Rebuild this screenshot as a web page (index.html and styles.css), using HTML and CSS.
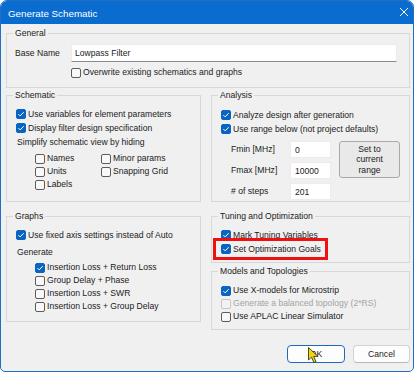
FILE: index.html
```html
<!DOCTYPE html>
<html lang="en">
<head>
    <meta charset="UTF-8">
    <meta name="viewport" content="width=device-width, initial-scale=1.0">
    <title>Generate Schematic</title>
    <link rel="stylesheet" href="styles.css">
</head>
<body>
    <div class="window">
        <!-- title bar -->
        <div class="titlebar">
            <span class="title">Generate Schematic</span>
            <svg class="close" width="10" height="10" viewBox="0 0 10 10">
                <path d="M1 1 L9 9 M9 1 L1 9" stroke="#fff" stroke-width="1" fill="none"/>
            </svg>
        </div>

        <div class="content">
            <!-- General -->
            <fieldset class="group general">
                <legend>General</legend>
                <div class="gbody">
                    <div class="name-row">
                        <span class="name-label">Base Name</span>
                        <div class="field wide">Lowpass Filter</div>
                    </div>
                    <div class="check overwrite"><span class="cb"></span>Overwrite existing schematics and graphs</div>
                </div>
            </fieldset>

            <div class="row row2">
                <!-- Schematic -->
                <fieldset class="group schematic">
                    <legend>Schematic</legend>
                    <div class="gbody">
                        <div class="check tall"><span class="cb on"><svg viewBox="0 0 10 10"><path d="M2.4 5.1 L4.2 6.9 L7.7 3.2"/></svg></span>Use variables for element parameters</div>
                        <div class="check tall"><span class="cb on"><svg viewBox="0 0 10 10"><path d="M2.4 5.1 L4.2 6.9 L7.7 3.2"/></svg></span>Display filter design specification</div>
                        <div class="note">Simplify schematic view by hiding</div>
                        <div class="hide-grid">
                            <div class="check"><span class="cb"></span>Names</div>
                            <div class="check"><span class="cb"></span>Minor params</div>
                            <div class="check"><span class="cb"></span>Units</div>
                            <div class="check"><span class="cb"></span>Snapping Grid</div>
                            <div class="check"><span class="cb"></span>Labels</div>
                        </div>
                    </div>
                </fieldset>

                <!-- Analysis -->
                <fieldset class="group analysis">
                    <legend>Analysis</legend>
                    <div class="gbody">
                        <div class="check tall"><span class="cb on"><svg viewBox="0 0 10 10"><path d="M2.4 5.1 L4.2 6.9 L7.7 3.2"/></svg></span>Analyze design after generation</div>
                        <div class="check tall"><span class="cb on"><svg viewBox="0 0 10 10"><path d="M2.4 5.1 L4.2 6.9 L7.7 3.2"/></svg></span>Use range below (not project defaults)</div>
                        <div class="range">
                            <span class="rlabel">Fmin [MHz]</span>
                            <div class="field">0</div>
                            <button class="btn range-btn">Set to<br>current<br>range</button>
                            <span class="rlabel">Fmax [MHz]</span>
                            <div class="field">10000</div>
                            <span class="rlabel"># of steps</span>
                            <div class="field">201</div>
                        </div>
                    </div>
                </fieldset>
            </div>

            <div class="row row3">
                <!-- Graphs -->
                <fieldset class="group graphs">
                    <legend>Graphs</legend>
                    <div class="gbody">
                        <div class="check tall"><span class="cb on"><svg viewBox="0 0 10 10"><path d="M2.4 5.1 L4.2 6.9 L7.7 3.2"/></svg></span>Use fixed axis settings instead of Auto</div>
                        <div class="note">Generate</div>
                        <div class="graph-list">
                            <div class="check"><span class="cb on"><svg viewBox="0 0 10 10"><path d="M2.4 5.1 L4.2 6.9 L7.7 3.2"/></svg></span>Insertion Loss + Return Loss</div>
                            <div class="check"><span class="cb"></span>Group Delay + Phase</div>
                            <div class="check"><span class="cb"></span>Insertion Loss + SWR</div>
                            <div class="check"><span class="cb"></span>Insertion Loss + Group Delay</div>
                        </div>
                    </div>
                </fieldset>

                <div class="stack">
                    <!-- Tuning and Optimization -->
                    <fieldset class="group tuning">
                        <legend>Tuning and Optimization</legend>
                        <div class="gbody">
                            <div class="check tall"><span class="cb on"><svg viewBox="0 0 10 10"><path d="M2.4 5.1 L4.2 6.9 L7.7 3.2"/></svg></span>Mark Tuning Variables</div>
                            <div class="check tall marked"><span class="cb on"><svg viewBox="0 0 10 10"><path d="M2.4 5.1 L4.2 6.9 L7.7 3.2"/></svg></span>Set Optimization Goals<span class="highlight"></span></div>
                        </div>
                    </fieldset>

                    <!-- Models and Topologies -->
                    <fieldset class="group models">
                        <legend>Models and Topologies</legend>
                        <div class="gbody">
                            <div class="check"><span class="cb on"><svg viewBox="0 0 10 10"><path d="M2.4 5.1 L4.2 6.9 L7.7 3.2"/></svg></span>Use X-models for Microstrip</div>
                            <div class="check disabled"><span class="cb"></span>Generate a balanced topology (2*RS)</div>
                            <div class="check"><span class="cb"></span>Use APLAC Linear Simulator</div>
                        </div>
                    </fieldset>
                </div>
            </div>

            <div class="buttons">
                <button class="btn ok">OK</button>
                <button class="btn cancel">Cancel</button>
            </div>
        </div>

        <!-- mouse pointer -->
        <svg class="cursor" width="12" height="17" viewBox="0 0 12 17">
            <path d="M0.5 0.5 L0.5 13 L3.6 10.2 L5.9 15.6 L8 14.7 L5.7 9.4 L10 9.4 Z" fill="#f2d60c" stroke="#3a3a20" stroke-width="0.9" stroke-linejoin="round"/>
        </svg>
    </div>
</body>
</html>
```

FILE: styles.css
```css
body {
    margin: 0;
    padding: 0;
    background-color: #ffffff;
    font-family: "Segoe UI", "Liberation Sans", Arial, sans-serif;
    font-size: 8.6px;
    color: #1b1b1b;
}

/* dialog window */
.window {
    position: relative;
    width: 414px;
    height: 372px;
    box-sizing: border-box;
    border: 1px solid #1f6fc5;
    border-radius: 7px 7px 5px 5px;
    background-color: #f0f0f0;
    overflow: hidden;
}

.titlebar {
    height: 23px;
    background-color: #0a6ccf;
    display: flex;
    align-items: center;
    justify-content: space-between;
    padding: 0 4px 0 7px;
}

.title {
    color: #ffffff;
    font-size: 9.8px;
    margin-top: 2px;
}

.close {
    margin-top: -1px;
}

.content {
    padding: 4px 3px 0 5px;
}

/* group boxes */
.group {
    margin: 0;
    padding: 0;
    min-width: 0;
    border: 1px solid #d8d8d8;
    box-sizing: border-box;
}

.group legend {
    margin-left: 6px;
    padding: 0 2px;
    line-height: 10px;
    font-size: 8.6px;
}

.general {
    height: 60px;
}

.general .gbody {
    padding: 6px 0 0 8px;
}

.name-row {
    display: flex;
    align-items: center;
    height: 18px;
}

.name-label {
    width: 56px;
}

.field {
    background-color: #ffffff;
    box-sizing: border-box;
    height: 17px;
    line-height: 16px;
    padding-left: 4px;
    border: 1px solid #ececec;
}

.field.wide {
    width: 326px;
    height: 18px;
    padding-left: 3px;
    border-bottom-color: #8c8c8c;
}

.check {
    display: flex;
    align-items: center;
    height: 13px;
    line-height: 13px;
    white-space: nowrap;
}

.check.tall {
    height: 14px;
}

.overwrite {
    margin-top: 4px;
    padding-left: 56px;
}

/* check boxes */
.cb {
    width: 10px;
    height: 10px;
    box-sizing: border-box;
    border: 1px solid #5c5c5c;
    border-radius: 2px;
    background-color: #f8f8f8;
    margin-right: 2px;
    flex-shrink: 0;
    display: flex;
}

.cb.on {
    background-color: #0a64c2;
    border-color: #0a64c2;
}

.cb svg {
    width: 10px;
    height: 10px;
    margin: -1px;
}

.cb svg path {
    fill: none;
    stroke: #ffffff;
    stroke-width: 1;
}

.disabled {
    color: #a4a4a4;
}

.disabled .cb {
    border-color: #c6c6c6;
    background-color: #f2f2f2;
}

.note {
    height: 14px;
    line-height: 14px;
    padding-left: 1px;
}

.row {
    display: grid;
    grid-template-columns: 195px 199px;
    column-gap: 10px;
}

.row2 {
    margin-top: 2px;
}

.row3 {
    margin-top: 9px;
    align-items: start;
}

.schematic,
.analysis {
    height: 112px;
}

.schematic .gbody,
.graphs .gbody,
.tuning .gbody {
    padding: 7px 0 0 9px;
}

.analysis .gbody {
    padding: 8px 0 0 9px;
}

.schematic .note {
    margin-bottom: 3px;
}

.hide-grid {
    display: grid;
    grid-template-columns: 66px auto;
    padding-left: 19px;
}

/* frequency range */
.range {
    display: grid;
    grid-template-columns: 59px 41px 61px;
    grid-auto-rows: 17px;
    row-gap: 4px;
    column-gap: 0;
    margin-top: 5px;
    padding-left: 10px;
    align-items: center;
}

.rlabel {
    line-height: 17px;
}

.btn {
    font-family: inherit;
    font-size: 8.6px;
    color: #1b1b1b;
    padding: 0;
    box-sizing: border-box;
    cursor: pointer;
}

.range-btn {
    grid-column: 3;
    grid-row: 1 / 3;
    margin-left: 8px;
    width: 61px;
    height: 37px;
    align-self: start;
    line-height: 10.5px;
    background-color: #e9e9e9;
    border: 1px solid #a9a9a9;
    border-radius: 3px;
}

.graphs {
    height: 111px;
}

.graphs .note {
    margin-top: 3px;
}

.graph-list {
    margin-top: 2px;
    padding-left: 19px;
}

.stack {
    display: flex;
    flex-direction: column;
    gap: 3px;
}

.tuning {
    height: 52px;
}

.marked {
    position: relative;
}

/* red highlight round one option */
.highlight {
    position: absolute;
    left: -8px;
    top: -4px;
    width: 115px;
    height: 22px;
    box-sizing: border-box;
    border: 3px solid #ee1111;
}

.models {
    height: 64px;
}

.models .gbody {
    padding: 8px 0 0 9px;
}

.buttons {
    display: flex;
    justify-content: flex-end;
    gap: 8px;
    margin-top: 15px;
}

.ok {
    width: 58px;
    height: 18px;
    background-color: #fdfdfd;
    border: 1.5px solid #1e68c0;
    border-radius: 4px;
}

.cancel {
    width: 57px;
    height: 18px;
    background-color: #fdfdfd;
    border: 1px solid #d2d2d2;
    border-bottom-color: #b8b8b8;
    border-radius: 4px;
}

.cursor {
    position: absolute;
    left: 307px;
    top: 346px;
}
```
